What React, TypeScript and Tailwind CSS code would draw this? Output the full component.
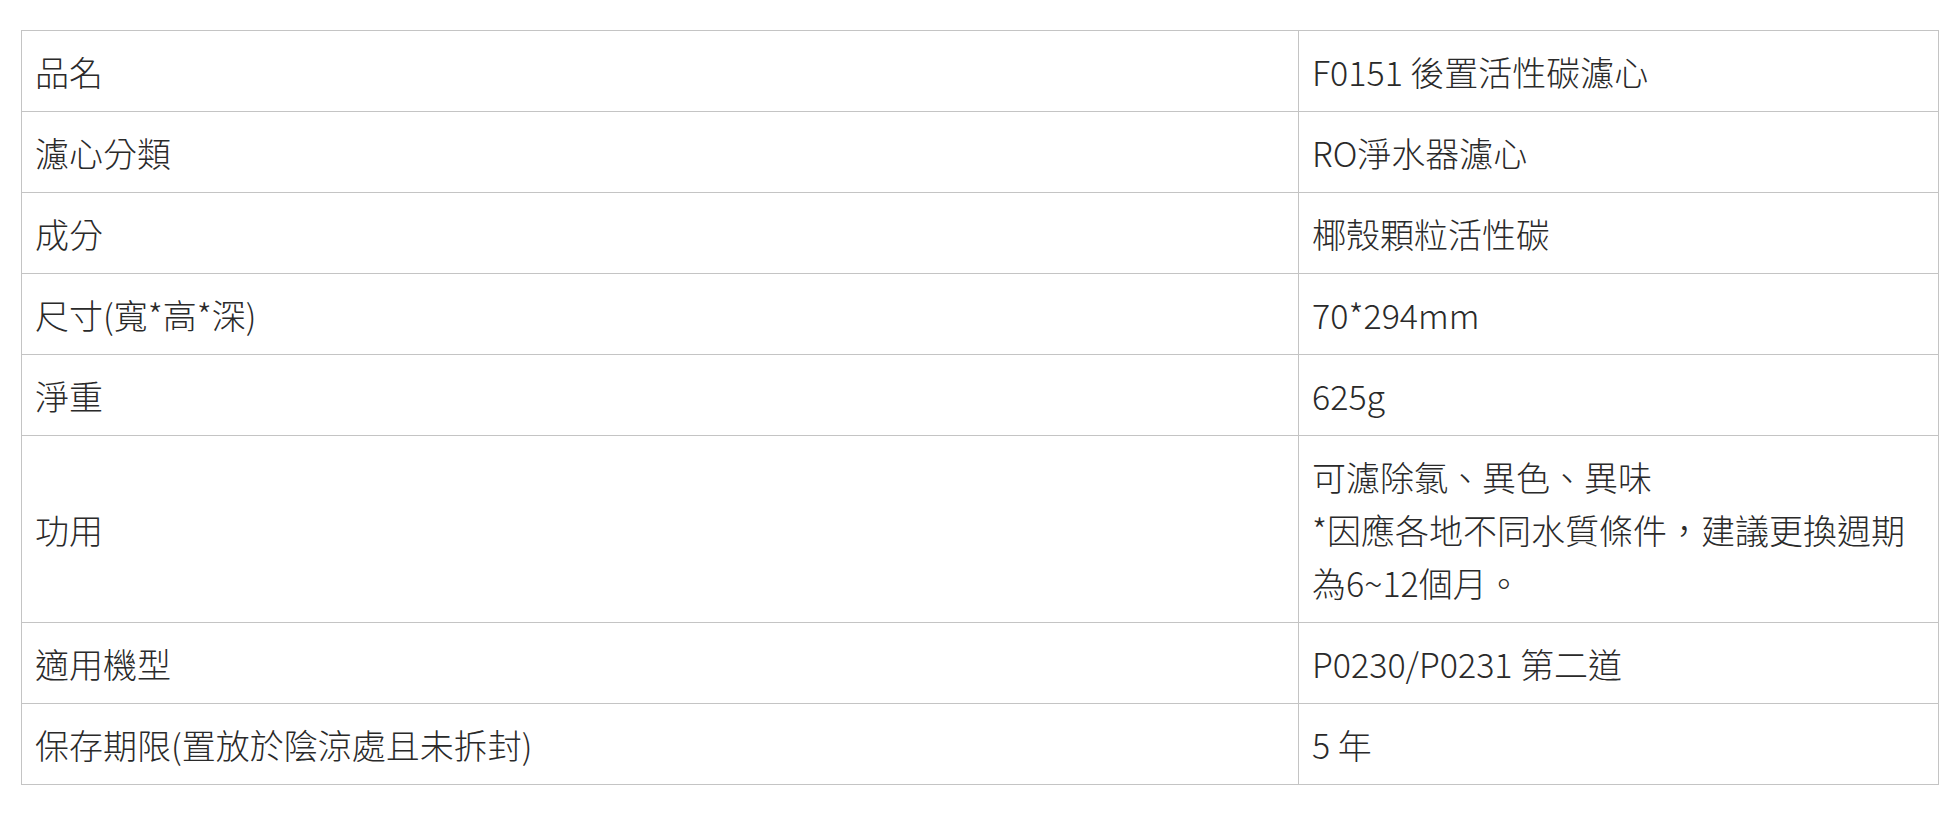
const rows: { label: string; value: string[] }[] = [
  { label: "品名", value: ["F0151 後置活性碳濾心"] },
  { label: "濾心分類", value: ["RO淨水器濾心"] },
  { label: "成分", value: ["椰殼顆粒活性碳"] },
  { label: "尺寸(寬*高*深)", value: ["70*294mm"] },
  { label: "淨重", value: ["625g"] },
  {
    label: "功用",
    value: ["可濾除氯、異色、異味", "*因應各地不同水質條件，建議更換週期為6~12個月。"],
  },
  { label: "適用機型", value: ["P0230/P0231 第二道"] },
  { label: "保存期限(置放於陰涼處且未拆封)", value: ["5 年"] },
]

export default function App() {
  return (
    <div
      className="min-h-screen bg-white pl-[21px] pt-[30px] text-[#2a2a2a]"
      style={{ fontFamily: '"Noto Sans CJK TC", "Noto Sans", sans-serif' }}
    >
      <table className="w-[1917px] table-fixed border-collapse text-[34px] font-light leading-[53px]">
        <colgroup>
          <col className="w-[1277px]" />
          <col className="w-[640px]" />
        </colgroup>
        <tbody>
          {rows.map((r) => (
            <tr key={r.label}>
              <td className="border border-[#c4c4c4] pl-[13px] pr-[13px] pt-[14px] pb-[13px] align-middle">{r.label}</td>
              <td className="border border-[#c4c4c4] pl-[13px] pr-[13px] pt-[14px] pb-[13px] align-middle">
                {r.value.map((v) => (
                  <div key={v}>{v}</div>
                ))}
              </td>
            </tr>
          ))}
        </tbody>
      </table>
    </div>
  )
}
